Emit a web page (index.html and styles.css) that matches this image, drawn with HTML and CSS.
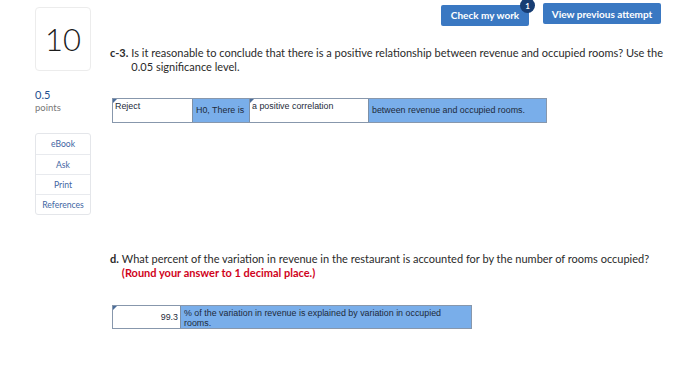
FILE: index.html
```html
<!DOCTYPE html>
<html>
<head>
<meta charset="utf-8">
<link rel="stylesheet" href="styles.css">
</head>
<body>
<div class="page">
  <aside class="side">
    <div class="qnum">10</div>
    <div class="pts"><div class="pts-val">0.5</div><div class="pts-lbl">points</div></div>
    <ul class="menu">
      <li>eBook</li>
      <li>Ask</li>
      <li>Print</li>
      <li>References</li>
    </ul>
  </aside>
  <main class="main">
    <div class="topbar">
      <div class="btn-wrap"><button class="btn">Check my work</button><span class="badge">1</span></div>
      <button class="btn">View previous attempt</button>
    </div>
    <div class="q q-c3"><b>c-3.</b><span>Is it reasonable to conclude that there is a positive relationship between revenue and occupied rooms? Use the 0.05 significance level.</span></div>
    <div class="ans ans1">
      <div class="inp w80">Reject</div>
      <div class="lbl lbl-mid">H0, There is</div>
      <div class="inp w120">a positive correlation</div>
      <div class="lbl lbl-end">between revenue and occupied rooms.</div>
    </div>
    <div class="q q-d"><b>d.</b><span>What percent of the variation in revenue in the restaurant is accounted for by the number of rooms occupied?<br><strong class="red">(Round your answer to 1 decimal place.)</strong></span></div>
    <div class="ans ans2">
      <div class="inp num">99.3</div>
      <div class="lbl lbl-wrap">% of the variation in revenue is explained by variation in occupied rooms.</div>
    </div>
  </main>
</div>
</body>
</html>
```
FILE: styles.css
```css
* { box-sizing: border-box; }
html, body { margin: 0; padding: 0; background: #fff; }
body { font-family: Lato, "Open Sans", Arial, sans-serif; color: #222; width: 700px; height: 370px; overflow: hidden; }
.page { display: flex; padding: 5px 0 0 35px; }
.side { width: 56px; display: flex; flex-direction: column; }
.qnum { height: 64px; margin-top: 2px; border: 1px solid #ececec; border-radius: 4px; display: flex; align-items: center; justify-content: center; font-size: 31px; color: #1b1b1b; font-weight: 300; }
.pts { margin-top: 18px; }
.pts-val { font-size: 11px; color: #1f4f8f; line-height: 12px; }
.pts-lbl { font-size: 9.5px; color: #777; line-height: 12px; margin-top: 1px; }
.menu { list-style: none; margin: 19px 0 0; padding: 0; border: 1px solid #e4e6ea; border-radius: 3px; }
.menu li { height: 20px; line-height: 20px; text-align: center; font-size: 8.6px; color: #3f66a3; border-top: 1px solid #e8eaee; white-space: nowrap; }
.menu li:first-child { border-top: none; }
.main { flex: 1; padding-left: 19px; padding-right: 20px; }
.topbar { display: flex; justify-content: flex-end; gap: 14px; padding-right: 19px; margin-top: -2px; }
.btn-wrap { position: relative; }
.btn { height: 21px; border: none; border-radius: 2px; background: #3a78c2; color: #fff; font-family: Lato, Arial, sans-serif; font-weight: 700; font-size: 10px; padding: 0; white-space: nowrap; }
.btn-wrap .btn { width: 88px; }
.btn-wrap + .btn { width: 118px; }
.badge { position: absolute; top: -5px; right: -6px; width: 15px; height: 15px; border-radius: 50%; background: #173d73; color: #fff; font-size: 8px; font-weight: 700; display: flex; align-items: center; justify-content: center; }
.q { display: flex; font-size: 11px; line-height: 14px; color: #2a2a2a; }
.q b { flex: none; font-weight: 700; margin-right: 3px; }
.q-c3 { margin-top: 20px; }
.q-d { margin-top: 129px; }
.red { color: #d0021b; font-weight: 700; }
.ans { display: flex; margin-left: 2px; border: 1px solid #8797ac; background: #79aeea; font-family: "Liberation Sans", Arial, sans-serif; font-size: 8.9px; color: #1d2a3a; }
.ans1 { width: 435px; height: 25px; margin-top: 24px; }
.ans2 { width: 360px; height: 24px; margin-top: 25px; }
.inp { position: relative; background: #fff; border-right: 1px solid #7e90a6; padding: 2px 2px 0; line-height: 10px; }
.inp::before { content: ""; position: absolute; left: 0; top: 0; border-top: 4px solid #4b6d9a; border-right: 4px solid transparent; }
.w80 { width: 80px; }
.w120 { width: 120px; border-left: 1px solid #7e90a6; }
.lbl { display: flex; align-items: center; padding: 0 3px; white-space: nowrap; }
.lbl-mid { width: 56px; }
.lbl-end { flex: 1; }
.num { width: 68px; text-align: right; padding-top: 6px; }
.lbl-wrap { align-items: flex-start; padding-top: 2px; line-height: 10px; width: 280px; white-space: normal; }
```
